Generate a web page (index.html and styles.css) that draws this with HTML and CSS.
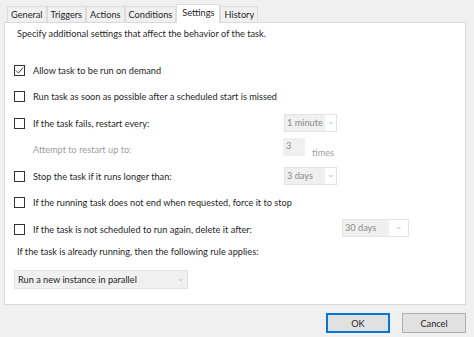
FILE: index.html
```html
<!DOCTYPE html>
<html lang="en">
<head>
    <meta charset="UTF-8">
    <title>Task Properties - Settings</title>
    <link rel="stylesheet" href="styles.css">
</head>
<body>
    <div class="tabs">
        <div class="tab first">General</div>
        <div class="tab">Triggers</div>
        <div class="tab">Actions</div>
        <div class="tab">Conditions</div>
        <div class="tab active">Settings</div>
        <div class="tab">History</div>
    </div>

    <div class="panel">
        <p class="intro">Specify additional settings that affect the behavior of the task.</p>

        <div class="row r1">
            <span class="box checked">
                <svg width="9" height="9" viewBox="0 0 9 9"><path d="M1 4.5 L3.5 7 L8 1.5" fill="none" stroke="#444" stroke-width="1"/></svg>
            </span>
            <span class="label">Allow task to be run on demand</span>
        </div>

        <div class="row">
            <span class="box"></span>
            <span class="label">Run task as soon as possible after a scheduled start is missed</span>
        </div>

        <div class="row">
            <span class="box"></span>
            <span class="label w-fail">If the task fails, restart every:</span>
            <span class="combo c-min"><span class="val">1 minute</span><span class="arrow">⌄</span></span>
        </div>

        <div class="row sub">
            <span class="label w-attempt disabled">Attempt to restart up to:</span>
            <span class="spin">3</span>
            <span class="times">times</span>
        </div>

        <div class="row">
            <span class="box"></span>
            <span class="label w-fail">Stop the task if it runs longer than:</span>
            <span class="combo c-min"><span class="val">3 days</span><span class="arrow">⌄</span></span>
        </div>

        <div class="row">
            <span class="box"></span>
            <span class="label">If the running task does not end when requested, force it to stop</span>
        </div>

        <div class="row">
            <span class="box"></span>
            <span class="label w-delete">If the task is not scheduled to run again, delete it after:</span>
            <span class="combo c-days"><span class="val">30 days</span><span class="arrow">⌄</span></span>
        </div>

        <p class="rule">If the task is already running, then the following rule applies:</p>

        <div class="combo c-rule"><span class="val">Run a new instance in parallel</span><span class="arrow">⌄</span></div>
    </div>

    <div class="footer">
        <button class="btn default">OK</button>
        <button class="btn">Cancel</button>
    </div>
</body>
</html>
```

FILE: styles.css
```css
body {
    margin: 0;
    width: 474px;
    height: 337px;
    background-color: #f0f0f0;
    font-family: Lato, "Open Sans", sans-serif;
    font-size: 9.2px;
    color: #1f1f1f;
    overflow: hidden;
    white-space: nowrap;
}
.tabs {
    display: flex;
    align-items: flex-end;
    padding: 4px 0 0 7px;
    height: 18px;
}
.tab {
    height: 16px;
    line-height: 15px;
    padding: 0 3px;
    background-color: #f0f0f0;
    border: 1px solid #dcdcdc;
    border-bottom: none;
    box-sizing: border-box;
}
.tab.active {
    height: 19px;
    line-height: 16px;
    background-color: #fff;
    position: relative;
    top: 1px;
    padding: 0 5px;
}
.panel {
    margin: 0 8px 0 4px;
    height: 283px;
    background-color: #fff;
    border: 1px solid #d9d9d9;
    box-sizing: border-box;
    padding: 0 12px;
}
.intro {
    margin: 4px 0 0 0;
    line-height: 14px;
}
.row {
    display: flex;
    align-items: center;
    height: 18px;
    margin: 8.5px 0 0 -3px;
}
.r1 {
    margin-top: 20px;
}
.box {
    width: 11px;
    height: 11px;
    border: 1px solid #333;
    box-sizing: border-box;
    margin-right: 8px;
    display: flex;
    align-items: center;
    justify-content: center;
}
.box.checked svg {
    display: block;
}
.label {
    flex-shrink: 0;
}
.sub {
    padding-left: 19px;
}
.disabled, .times {
    color: #a0a0a0;
}
.w-fail {
    width: 251px;
}
.w-attempt {
    width: 250px;
}
.w-delete {
    width: 309px;
}
.combo {
    display: flex;
    align-items: center;
    height: 18px;
    border: 1px solid #e3e3e3;
    box-sizing: border-box;
    color: #8a8a8a;
    background-color: #fff;
    flex-shrink: 0;
}
.combo .val {
    background-color: #f0f0f0;
    height: 100%;
    line-height: 15px;
    padding-left: 2px;
    box-sizing: border-box;
}
.combo .arrow {
    color: #c0c0c0;
    font-size: 9px;
    line-height: 8px;
    margin: 0 auto;
    position: relative;
    top: -2px;
}
.c-min {
    width: 53px;
}
.c-min .val {
    width: 40px;
}
.c-days {
    width: 67px;
    margin-top: -3px;
}
.c-days .val {
    width: 46px;
}
.spin {
    width: 22px;
    height: 18px;
    background-color: #f0f0f0;
    color: #8a8a8a;
    line-height: 15px;
    padding-left: 3px;
    box-sizing: border-box;
    margin-top: -6px;
    flex-shrink: 0;
}
.times {
    margin-left: 7px;
    margin-top: 6px;
}
.rule {
    margin: 7px 0 0 0;
    line-height: 14px;
}
.c-rule {
    margin: 11px 0 0 -3px;
    width: 174px;
    height: 19px;
    border-color: #e0e0e0;
    color: #1f1f1f;
    background-color: #f0f0f0;
}
.c-rule .val {
    width: 160px;
    padding-left: 3px;
    line-height: 17px;
}
.footer {
    display: flex;
    justify-content: flex-end;
    gap: 12px;
    padding: 8px 8px 0 0;
}
.btn {
    width: 64px;
    height: 20px;
    font-family: inherit;
    font-size: 9.2px;
    color: #1f1f1f;
    background-color: #e1e1e1;
    border: 1px solid #adadad;
    padding: 0;
}
.btn.default {
    border: 2px solid #0078d7;
}
```
